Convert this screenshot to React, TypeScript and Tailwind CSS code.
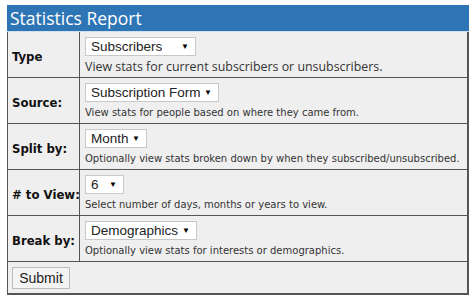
import React from 'react';

type Row = {
  label: string;
  value: string;
  width: string;
  note: string;
  big?: boolean;
};

const rows: Row[] = [
  { label: 'Type', value: 'Subscribers', width: 'w-[111px]', note: 'View stats for current subscribers or unsubscribers.', big: true },
  { label: 'Source:', value: 'Subscription Form', width: 'w-[134px]', note: 'View stats for people based on where they came from.' },
  { label: 'Split by:', value: 'Month', width: 'w-[62px]', note: 'Optionally view stats broken down by when they subscribed/unsubscribed.' },
  { label: '# to View:', value: '6', width: 'w-[39px]', note: 'Select number of days, months or years to view.' },
  { label: 'Break by:', value: 'Demographics', width: 'w-[112px]', note: 'Optionally view stats for interests or demographics.' },
];

function FakeSelect({ value, width }: { value: string; width: string }) {
  return (
    <div
      className={`flex h-[19px] ${width} items-center justify-between whitespace-nowrap border border-[#c8c8c8] bg-white pl-[5px] pr-[6px] text-[13.5px] leading-none text-[#222] font-['Liberation_Sans',Arial,sans-serif]`}
    >
      <span>{value}</span>
      <span className="text-[8px] text-black">▼</span>
    </div>
  );
}

export default function App() {
  return (
    <div className="min-h-[299px] w-[474px] bg-white pl-[7px] pt-[5px]">
      <div className="w-[462px]">
        <div className="flex h-[27px] items-center border-b border-[#cfe0f0] bg-[#2e75b6] pl-[3px] text-[17.5px] text-white font-['Open_Sans','Noto_Sans',sans-serif]">
          Statistics Report
        </div>
        <div className="border-b-2 border-l border-r-2 border-[#555] bg-[#efefef]">
          {rows.map((row) => (
            <div key={row.label} className="flex h-[46px] border-b border-[#555]">
              <div className="flex w-[72px] shrink-0 items-center whitespace-nowrap border-r border-[#555] pl-[4px] pt-[4px] text-[13px] font-bold text-[#111] font-['DejaVu_Sans_Condensed','Liberation_Sans',sans-serif]">
                {row.label}
              </div>
              <div className="flex flex-col pl-[5px] pt-[5px]">
                <FakeSelect value={row.value} width={row.width} />
                <div
                  className={
                    row.big
                      ? "mt-[3px] whitespace-nowrap text-[12.4px] leading-[16px] text-[#333] font-['Open_Sans','Noto_Sans',sans-serif]"
                      : "mt-[5px] whitespace-nowrap text-[10px] leading-[12px] text-[#333] font-['DejaVu_Sans',Verdana,sans-serif]"
                  }
                >
                  {row.note}
                </div>
              </div>
            </div>
          ))}
          <div className="flex h-[31px] items-center pl-[4px]">
            <button
              type="button"
              className="h-[22px] w-[58px] border border-[#bdbdbd] bg-[#f4f4f4] text-[14px] text-[#222] font-['Liberation_Sans',Arial,sans-serif]"
            >
              Submit
            </button>
          </div>
        </div>
      </div>
    </div>
  );
}
